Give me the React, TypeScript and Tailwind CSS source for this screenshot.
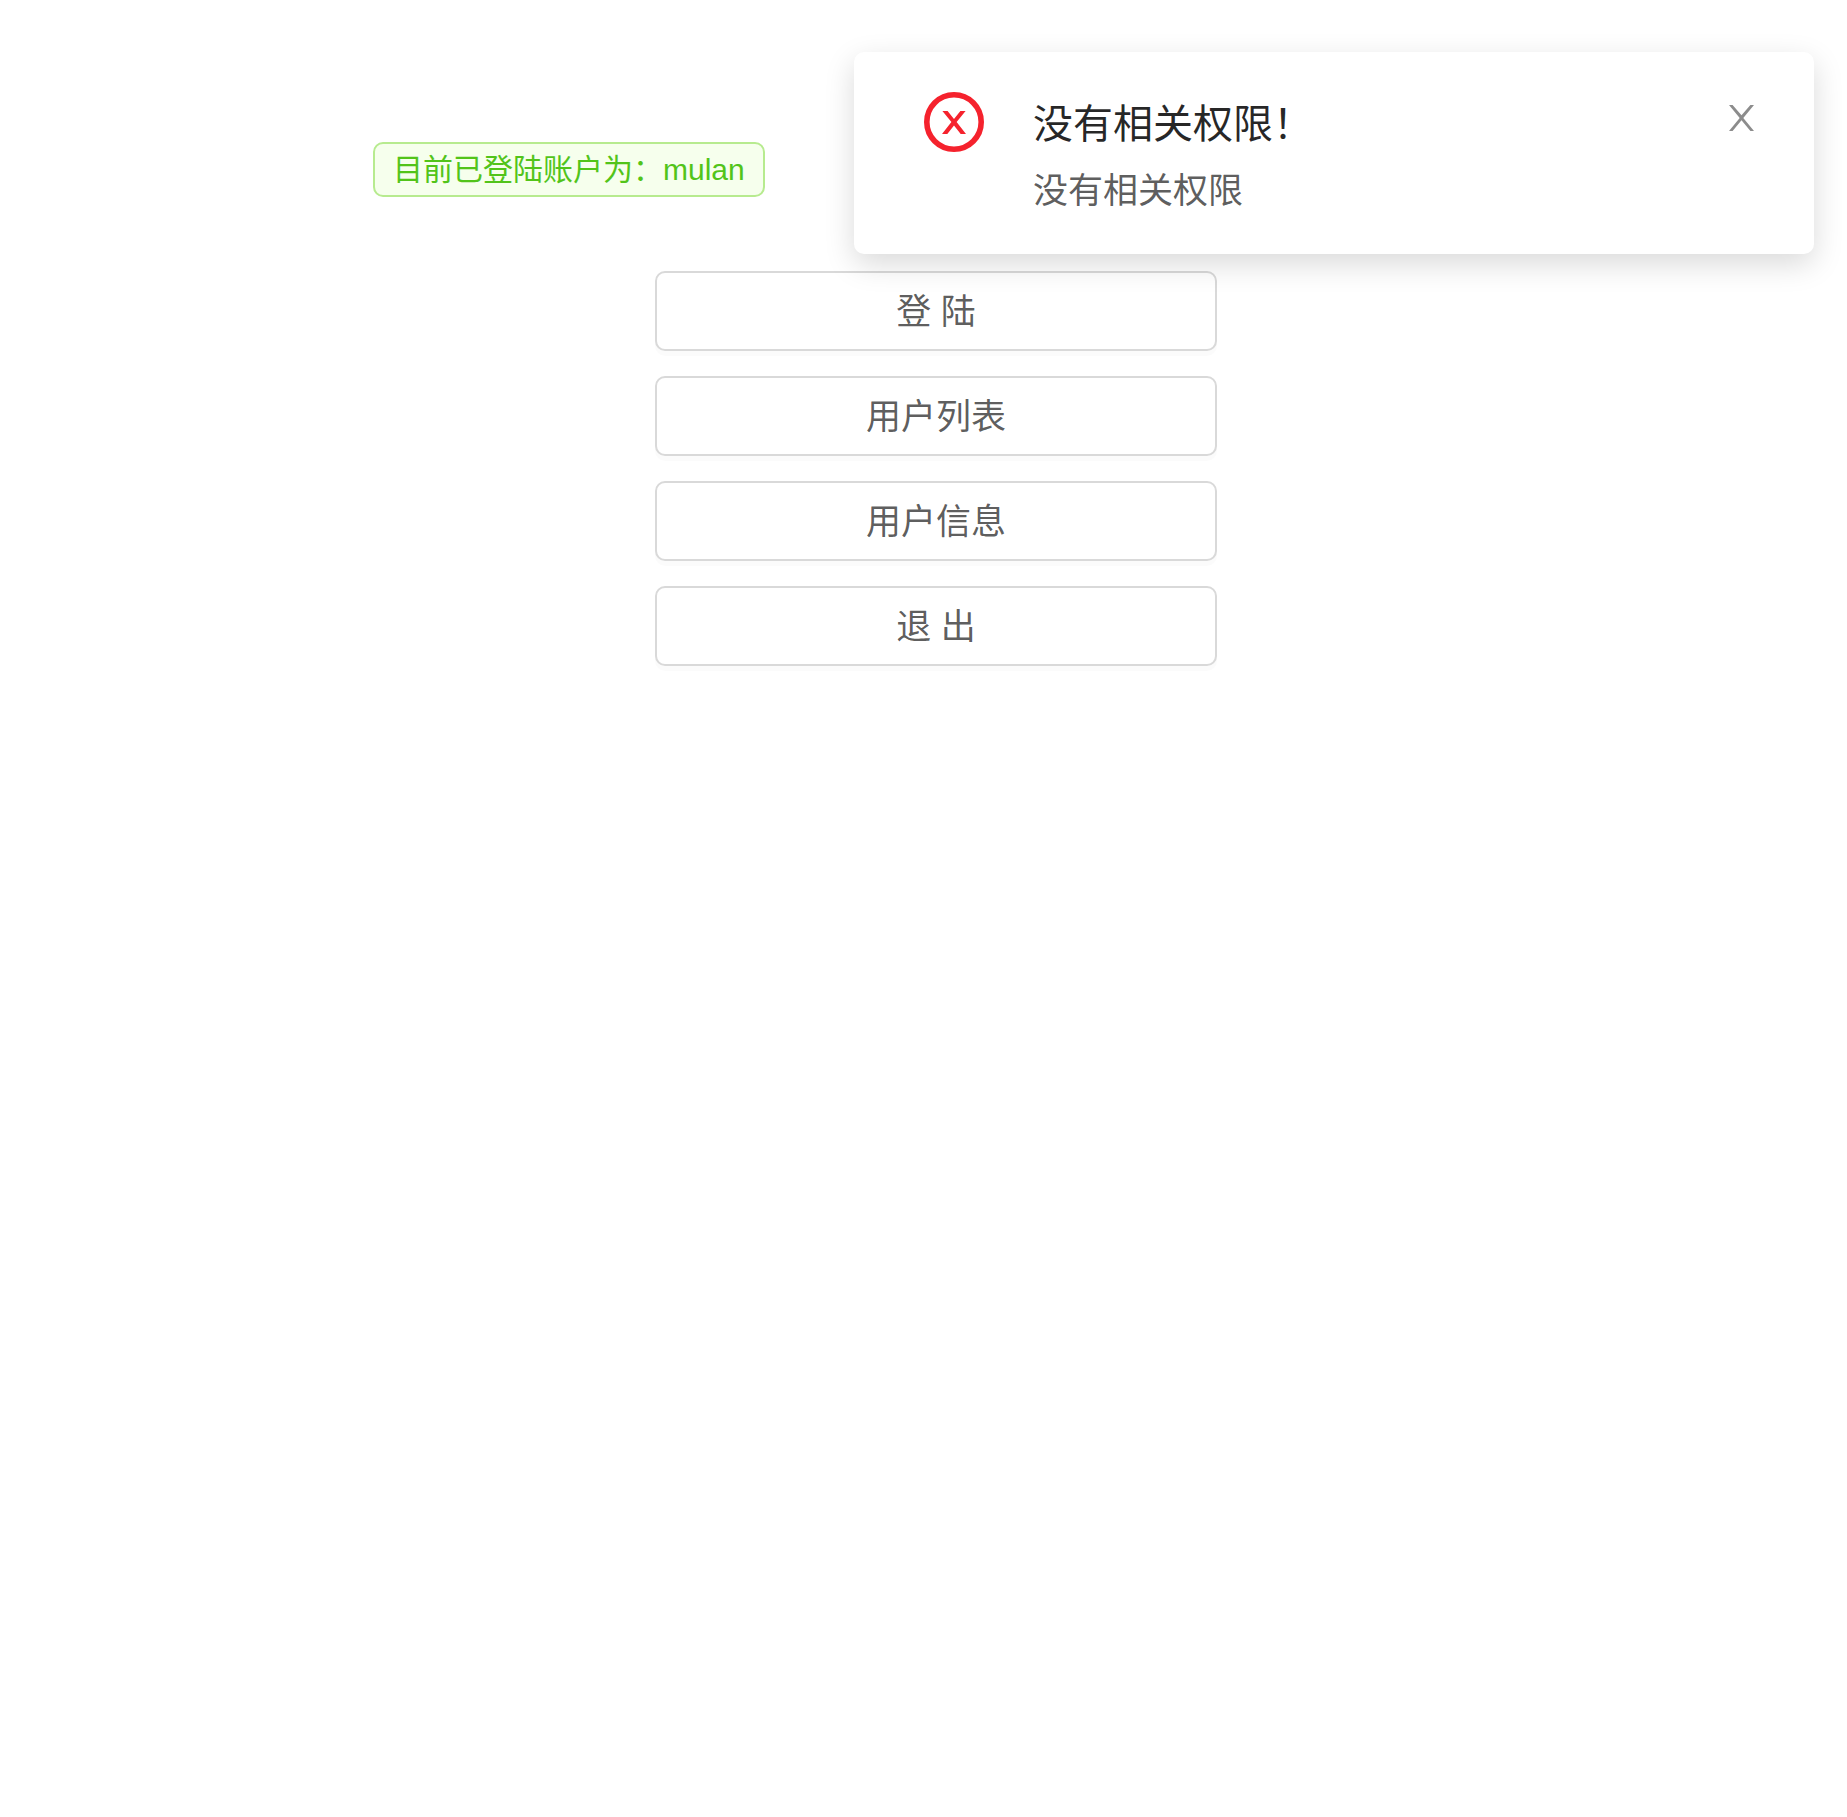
const font = "font-['Liberation_Sans','Noto_Sans_CJK_SC',sans-serif]";

const buttons = ["登 陆", "用户列表", "用户信息", "退 出"];

function ErrorIcon() {
  return (
    <svg viewBox="0 0 60 60" className="h-[60px] w-[60px] shrink-0 text-[#f5222d]">
      <circle cx="30" cy="30" r="27.2" fill="none" stroke="currentColor" strokeWidth="5.6" />
      <path
        d="M18.4 19h5.2L30 27.1 36.4 19h5.2L32.6 30 42 42h-5.3L30 33.4 23.3 42H18l9.4-12z"
        fill="currentColor"
      />
    </svg>
  );
}

function CloseIcon() {
  return (
    <svg
      viewBox="0 0 25 26"
      className="absolute right-[60px] top-[53px] h-[26px] w-[25px] text-[#00000073]"
    >
      <path
        d="M0 0h3.6L12.5 10.3 21.4 0H25L14.3 12.9 25 26h-3.6L12.5 15.3 3.6 26H0L10.7 12.9z"
        fill="currentColor"
      />
    </svg>
  );
}

export default function App() {
  return (
    <div className={`relative min-h-[1817px] bg-white pt-[142px] ${font}`}>
      {/* logged in tag */}
      <div className="ml-[373px] flex h-[55px] w-[392px] items-center whitespace-nowrap rounded-[10px] border-[2.5px] border-[#b7eb8f] bg-[#f6ffed] pl-[18px] text-[30px] text-[#52c41a]">
        目前已登陆账户为：mulan
      </div>

      {/* actions */}
      <div className="ml-[655px] mt-[74px] flex w-[562px] flex-col gap-[25px]">
        {buttons.map((label) => (
          <button
            key={label}
            className="h-[80px] rounded-[10px] border-[2.5px] border-[#d9d9d9] bg-white pt-[2px] text-[35px] text-[#000000a6] shadow-[0_5px_0_rgba(0,0,0,0.015)]"
          >
            {label}
          </button>
        ))}
      </div>

      {/* notification */}
      <div className="absolute left-[854px] top-[52px] h-[202px] w-[960px] rounded-[10px] bg-white shadow-[0_10px_30px_rgba(0,0,0,0.15)]">
        <div className="flex pl-[70px] pt-[40px]">
          <ErrorIcon />
          <div className="ml-[49px]">
            <div className="pt-[2px] text-[40px] leading-[60px] text-[#000000d9]">没有相关权限！</div>
            <div className="mt-[9px] text-[35px] leading-[55px] text-[#000000a6]">没有相关权限</div>
          </div>
        </div>
        <CloseIcon />
      </div>
    </div>
  );
}
